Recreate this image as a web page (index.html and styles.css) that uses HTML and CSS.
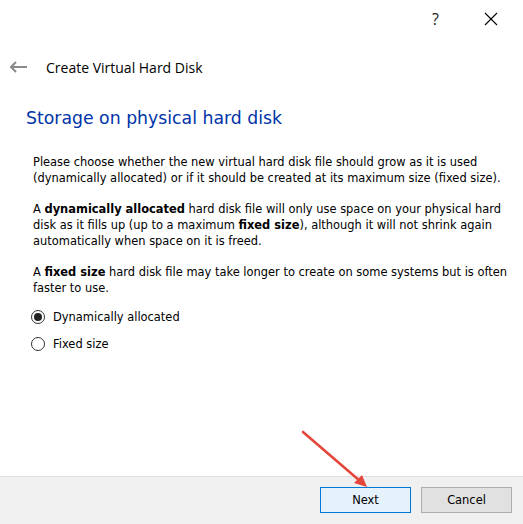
FILE: index.html
```html
<!DOCTYPE html>
<html>
<head>
<meta charset="utf-8">
<link rel="stylesheet" href="styles.css">
</head>
<body>
<div class="dialog">
  <div class="titlebar">
    <span class="help">?</span>
    <span class="close">
      <svg width="14" height="14" viewBox="0 0 14 14"><path d="M1 1L13 13M13 1L1 13" stroke="#000" stroke-width="1.1" fill="none"/></svg>
    </span>
  </div>
  <div class="navrow">
    <svg class="back" width="18" height="12" viewBox="0 0 18 12"><path d="M1 6H17M6 1L1 6L6 11" stroke="#8a8a8a" stroke-width="2" fill="none"/></svg>
    <span class="wiztitle">Create Virtual Hard Disk</span>
  </div>
  <div class="content">
    <h1 class="heading">Storage on physical hard disk</h1>
    <p class="para">Please choose whether the new virtual hard disk file should grow as it is used<br>(dynamically allocated) or if it should be created at its maximum size (fixed size).</p>
    <p class="para">A <b>dynamically allocated</b> hard disk file will only use space on your physical hard<br>disk as it fills up (up to a maximum <b>fixed size</b>), although it will not shrink again<br>automatically when space on it is freed.</p>
    <p class="para">A <b>fixed size</b> hard disk file may take longer to create on some systems but is often<br>faster to use.</p>
    <div class="radios">
      <label class="radio"><span class="dot checked"></span>Dynamically allocated</label>
      <label class="radio"><span class="dot"></span>Fixed size</label>
    </div>
  </div>
  <div class="footer">
    <button class="btn primary">Next</button>
    <button class="btn">Cancel</button>
  </div>
  <svg class="annot" width="523" height="524" viewBox="0 0 523 524">
    <line x1="303" y1="432" x2="360" y2="481" stroke="#e4463b" stroke-width="2.6" stroke-linecap="round"/>
    <polygon points="367,487 354,483 362,475" fill="#e4463b"/>
  </svg>
</div>
</body>
</html>
```
FILE: styles.css
```css
html, body {
  margin: 0;
  padding: 0;
  background: #fff;
}
.dialog {
  position: relative;
  width: 523px;
  height: 524px;
  display: flex;
  flex-direction: column;
  background: #fff;
  font-family: "DejaVu Sans", Tahoma, sans-serif;
  overflow: hidden;
}
.titlebar {
  height: 38px;
  display: flex;
  align-items: center;
  justify-content: flex-end;
  padding-right: 25px;
  gap: 45px;
}
.help {
  font-family: "Open Sans", sans-serif;
  font-size: 16px;
  color: #222;
}
.close {
  display: flex;
}
.navrow {
  height: 58px;
  display: flex;
  align-items: center;
  padding-left: 10px;
  gap: 18px;
}
.back {
  display: block;
}
.wiztitle {
  font-family: "Open Sans", sans-serif;
  font-size: 14px;
  color: #000;
}
.content {
  flex: 1;
  padding-left: 26px;
}
.heading {
  margin: 9px 0 0 0;
  font-family: "DejaVu Sans", sans-serif;
  font-weight: normal;
  font-size: 17.3px;
  color: #0033a8;
  line-height: 26px;
}
.para {
  margin: 23px 0 0 7px;
  font-size: 11.45px;
  line-height: 16px;
  color: #000;
  white-space: nowrap;
}
.para + .para {
  margin-top: 15px;
}
.radios {
  margin-top: 12px;
  margin-left: 5px;
  display: flex;
  flex-direction: column;
  gap: 9px;
}
.radio {
  display: flex;
  align-items: center;
  gap: 8px;
  font-size: 11.45px;
  height: 18px;
}
.dot {
  width: 14px;
  height: 14px;
  border: 1px solid #333;
  border-radius: 50%;
  box-sizing: border-box;
  display: flex;
  align-items: center;
  justify-content: center;
  background: #fff;
}
.dot.checked::after {
  content: "";
  width: 8px;
  height: 8px;
  border-radius: 50%;
  background: #222;
}
.footer {
  height: 46px;
  background: #f0f0f0;
  border-top: 1px solid #dfdfdf;
  display: flex;
  justify-content: flex-end;
  align-items: center;
  gap: 10px;
  padding-right: 11px;
  padding-bottom: 1px;
}
.btn {
  width: 91px;
  height: 26px;
  font-family: "DejaVu Sans", sans-serif;
  font-size: 11.45px;
  color: #000;
  background: #e1e1e1;
  border: 1px solid #adadad;
  padding: 0;
}
.btn.primary {
  background: #e5f1fb;
  border-color: #0078d7;
}
.annot {
  position: absolute;
  left: 0;
  top: 0;
  pointer-events: none;
}
```
